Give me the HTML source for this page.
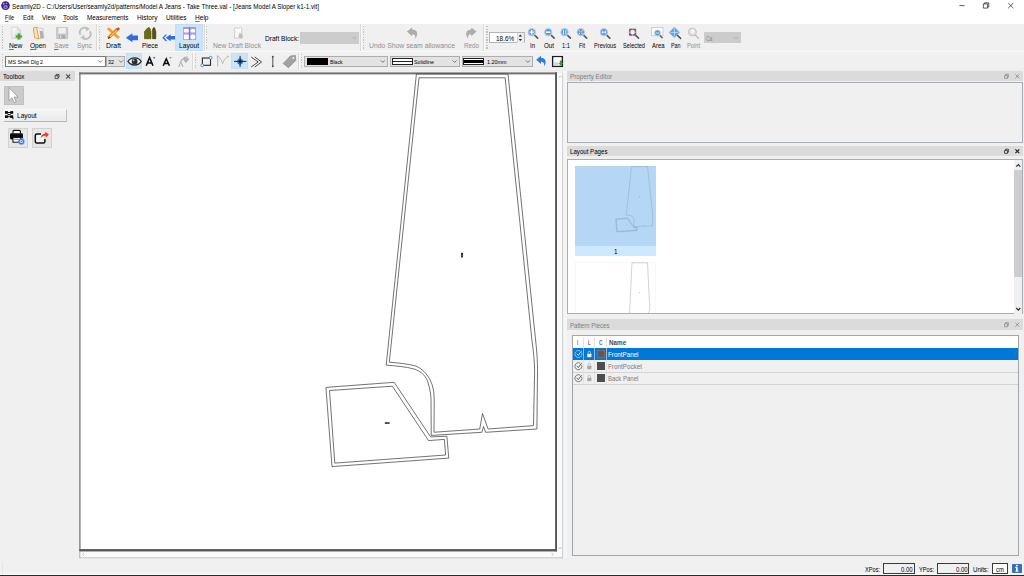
<!DOCTYPE html>
<html lang="en">
<head>
<meta charset="utf-8">
<title>Seamly2D - Layout</title>
<style>
html,body{margin:0;padding:0;}
body{width:1024px;height:576px;overflow:hidden;background:#f0f0f0;font-family:"Liberation Sans",sans-serif;}
#app{position:relative;width:1024px;height:576px;overflow:hidden;background:#f0f0f0;}
#app div{position:absolute;box-sizing:border-box;}
.t{position:absolute;white-space:nowrap;transform-origin:0 50%;display:block;}
.t u{text-decoration:underline;text-decoration-thickness:0.4px;text-underline-offset:0.9px;text-decoration-color:rgba(0,0,0,.5);}
#icons{position:absolute;left:0;top:0;width:1024px;height:576px;}
.white{background:#fff;}
.dtitle{background:#dbdbdb;}
.combo{background:#e3e3e3;border:0.6px solid #adadad;}
.combo.dis{background:#cccccc;border-color:#cccccc;}
.combo.wh{background:#fff;border-color:#7a7a7a;}
.hl{background:#cce4f7;border:0.5px solid #c3def5;}
.sep{background:#dadada;width:0.9px;box-shadow:0.9px 0 0 #fbfbfb;}
.sep2{background:#fff;width:1px;}
.grip{width:1.4px;background-image:repeating-linear-gradient(to bottom,#c2c2c2 0,#c2c2c2 0.8px,transparent 0.8px,transparent 1.6px);}
.tbtn{background:#e6e6e6;border:0.6px solid #d2d2d2;}

</style>
</head>
<body>
<div id="app">
<!-- title + menu -->
<div class="white" style="left:0;top:0;width:1024px;height:23.6px"></div>
<!-- toolbar separators lines -->
<div style="left:0;top:51px;width:1024px;height:1px;background:#fbfbfb"></div>
<div style="left:0;top:69.6px;width:1024px;height:1.2px;background:linear-gradient(#e2e2e2,#f4f4f4)"></div>

<!-- toolbar 1 grips & separators -->
<div class="grip" style="left:1.6px;top:26px;height:24px"></div>
<div class="sep" style="left:96.3px;top:24px;height:27px"></div>
<div class="grip" style="left:99px;top:26px;height:24px"></div>
<div class="sep" style="left:203.8px;top:24px;height:27px"></div>
<div class="grip" style="left:206px;top:26px;height:24px"></div>
<div class="sep" style="left:360.3px;top:24px;height:27px"></div>
<div class="grip" style="left:362.6px;top:26px;height:24px"></div>
<div class="sep" style="left:483.3px;top:24px;height:27px"></div>
<div class="grip" style="left:486.4px;top:26px;height:24px"></div>

<!-- layout button highlight -->
<div class="hl" style="left:175px;top:24px;width:28.4px;height:26.8px"></div>

<!-- draft block combo (disabled) -->
<div class="combo dis" style="left:300px;top:32px;width:59px;height:11.6px"></div>
<!-- zoom spinbox -->
<div class="combo wh" style="left:489px;top:32.2px;width:35.6px;height:11px;border-color:#b5b5b5"></div>
<div style="left:516.6px;top:32.8px;width:7.4px;height:9.8px;background:#ececec;border-left:0.5px solid #d5d5d5"></div>
<!-- point combo (disabled) -->
<div class="combo dis" style="left:704px;top:32.4px;width:37px;height:10.8px"></div>

<!-- toolbar 2 -->
<div class="grip" style="left:1.6px;top:54px;height:14px"></div>
<div class="combo wh" style="left:5.4px;top:56.3px;width:100.4px;height:10.4px"></div>
<div class="combo" style="left:105.8px;top:56.3px;width:19.6px;height:10.4px"></div>
<div class="hl" style="left:126.4px;top:53.2px;width:16px;height:16px"></div>
<div class="sep" style="left:192.3px;top:52.5px;height:17px"></div>
<div class="grip" style="left:195px;top:54px;height:14px"></div>
<div class="hl" style="left:231px;top:53.2px;width:17px;height:16px"></div>
<div class="sep" style="left:297.8px;top:52.5px;height:17px"></div>
<div class="grip" style="left:300.6px;top:54px;height:14px"></div>
<div class="combo" style="left:304px;top:56.3px;width:83.8px;height:10.4px"></div>
<div style="left:306.6px;top:57.8px;width:21.6px;height:7.2px;background:#000"></div>
<div class="combo" style="left:390.3px;top:56.3px;width:69.4px;height:10.4px"></div>
<div style="left:392px;top:57.6px;width:20.8px;height:7.8px;background:#fff;border:0.8px solid #222"></div>
<div style="left:393px;top:61px;width:19px;height:1px;background:#222"></div>
<div class="combo" style="left:462.1px;top:56.3px;width:70.6px;height:10.4px"></div>
<div style="left:463.4px;top:57.6px;width:20.8px;height:7.8px;background:#fff;border:0.8px solid #222"></div>
<div style="left:464.4px;top:60.2px;width:19px;height:2.6px;background:#000"></div>

<!-- Toolbox dock -->
<div class="dtitle" style="left:0;top:70.9px;width:75px;height:10px"></div>
<div style="left:4px;top:85.8px;width:19.6px;height:19px;background:#cbcbcb;border:0.5px solid #c0c0c0"></div>
<div style="left:3px;top:108.8px;width:64.4px;height:12.9px;background:linear-gradient(#f4f4f4,#ebebeb);border:0.6px solid #fafafa;border-right:1px solid #c2c2c2;border-bottom:1.1px solid #b9b9b9"></div>
<div class="tbtn" style="left:8px;top:128.2px;width:19.7px;height:19.6px"></div>
<div class="tbtn" style="left:32px;top:128.2px;width:19.9px;height:19.6px"></div>

<!-- canvas -->
<div style="left:80px;top:73px;width:476px;height:477px;background:#fff"></div>
<!-- scrollbars (thin) -->
<div style="left:557px;top:73px;width:5.4px;height:485px;background:#fafafa"></div>
<div style="left:80px;top:551px;width:482.4px;height:6.6px;background:#fafafa"></div>
<div style="left:563.2px;top:71px;width:4.2px;height:487px;background:#f5f5f5"></div>
<!-- Property editor -->
<div class="dtitle" style="left:567.3px;top:71px;width:455.9px;height:10.3px"></div>
<div style="left:567.4px;top:82.3px;width:455.8px;height:60.5px;background:#f0f0f0;border:0.9px solid #a9adb4"></div>
<!-- Layout pages -->
<div class="dtitle" style="left:567.3px;top:146px;width:455.9px;height:10.3px"></div>
<div style="left:567.4px;top:159px;width:455.8px;height:155.4px;background:#fff;border:0.9px solid #a9adb4"></div>
<div style="left:575px;top:166px;width:81px;height:79.8px;background:#b5d6f4"></div>
<div style="left:575px;top:245.7px;width:81px;height:10.8px;background:#cde8ff"></div>
<div style="left:575.4px;top:262.2px;width:80.6px;height:51.2px;background:#fff;border:0.5px solid #f8f8f8;border-bottom:none"></div>
<!-- scrollbar -->
<div style="left:1014.2px;top:160px;width:8.2px;height:153.6px;background:#f0f0f0"></div>
<div style="left:1014.2px;top:169.8px;width:8.2px;height:106.8px;background:#cdcdcd"></div>
<!-- Pattern pieces -->
<div class="dtitle" style="left:567.3px;top:319.4px;width:455.9px;height:10.3px"></div>
<div style="left:572px;top:335.2px;width:447px;height:220.4px;background:#f0f0f0;border:0.9px solid #a0a6ae"></div>
<div class="white" style="left:572.9px;top:336.1px;width:445.2px;height:11.9px"></div>
<div style="left:583.4px;top:337px;width:0.6px;height:10px;background:#e3e3e3"></div>
<div style="left:594.4px;top:337px;width:0.6px;height:10px;background:#e3e3e3"></div>
<div style="left:606.4px;top:337px;width:0.6px;height:10px;background:#e3e3e3"></div>
<div style="left:572.9px;top:348.2px;width:445.2px;height:11.8px;background:#0078d7"></div>
<div style="left:572.9px;top:372px;width:445.2px;height:0.7px;background:#d4d4d4"></div>
<div style="left:572.9px;top:384px;width:445.2px;height:0.7px;background:#d4d4d4"></div>
<div style="left:583.4px;top:348px;width:0.6px;height:36px;background:#dcdcdc;opacity:.7"></div>
<div style="left:594.4px;top:348px;width:0.6px;height:36px;background:#dcdcdc;opacity:.7"></div>
<div style="left:606.4px;top:348px;width:0.6px;height:36px;background:#dcdcdc;opacity:.7"></div>
<div style="left:597px;top:350px;width:8px;height:8px;background:#5a5a5a;border:0.5px solid #8a6a55"></div>
<div style="left:597px;top:362px;width:8px;height:8px;background:#4d4d4d"></div>
<div style="left:597px;top:374px;width:8px;height:8px;background:#4d4d4d"></div>

<!-- status bar -->
<div style="left:0;top:573.4px;width:1024px;height:1.2px;background:#f7f7f7"></div>
<div style="left:883.2px;top:563.2px;width:32.2px;height:10.4px;background:#f0f0f0;border:0.9px solid #3a3a3a"></div>
<div style="left:937.4px;top:563.2px;width:32px;height:10.4px;background:#f0f0f0;border:0.9px solid #3a3a3a"></div>
<div style="left:991.8px;top:563.2px;width:16.4px;height:10.4px;background:#fff;border:0.9px solid #3a3a3a"></div>
<div style="left:1012px;top:563.6px;width:9.6px;height:9.2px;background:#3b6fb0;border-radius:1px"></div>

<div style="left:1.5px;top:561.6px;width:1px;height:13px;background:#e5e5e5"></div>

<div style="left:0;top:574.6px;width:1024px;height:1.4px;background:#2b2b2b"></div>

<svg id="icons" viewBox="0 0 1024 576" width="1024" height="576">
<defs>
  <radialGradient id="lens" cx="50%" cy="45%" r="60%">
    <stop offset="0" stop-color="#3f8fe6"/><stop offset="0.6" stop-color="#5c9fe3"/><stop offset="1" stop-color="#b9d3ef"/>
  </radialGradient>
  <radialGradient id="lensg" cx="50%" cy="45%" r="60%">
    <stop offset="0" stop-color="#f4f4f4"/><stop offset="0.7" stop-color="#dcdcdc"/><stop offset="1" stop-color="#c2c2c2"/>
  </radialGradient>
  <g id="mag">
    <line x1="3.1" y1="3.1" x2="5.9" y2="5.9" stroke="#5c5c5c" stroke-width="1.7" stroke-linecap="round"/>
    <circle cx="0" cy="0" r="3.75" fill="url(#lens)" stroke="#c9c6bf" stroke-width="0.9"/>
  </g>
  <g id="pieces-outer">
    <path d="M416.4,74 L508,74 L535.6,340 C537,353 537.6,362 537.5,372 L536.9,429 L485.6,432.3 L483.5,426.5 L481.9,432.3 L431.25,435.4 L431,400.3 C431,395 430,389 428,382.7 C426.5,377 422,371.5 414,369 C406,366.6 396,366 386.2,365.1 Z"/>
  </g>
  <g id="pieces-inner">
    <path d="M419,77.8 L505.1,77.8 L531.9,340 C533.5,352 534.7,362 534.6,372 L533.5,425.6 L488.1,429 L482.5,413.5 L479.75,429 L434,432.25 L434.2,400 C434.3,392 433,386 430.6,381 C427.5,374 421.5,368.2 415.7,366 C407,363.6 398,363 389.3,362.2 Z"/>
  </g>
  <g id="pocket">
    <path d="M325.9,387.4 L394.2,382.3 L430.6,436.9 L446.9,436.25 L448.75,458.1 L332,466.6 Z"/>
    <path d="M329.5,390.5 L392.4,386.2 L428.5,440.6 L444.4,439.4 L445.6,455 L334.8,463.1 Z"/>
  </g>
</defs>

<!-- ===== canvas frame (fractional edges) ===== -->
<rect x="562.3" y="72.6" width="0.8" height="485.6" fill="#c2c6cd"/>
<rect x="79.2" y="557.4" width="483.9" height="0.85" fill="#b9bdc5"/>
<rect x="79.2" y="72.4" width="1.4" height="479" fill="#7c8088"/>
<rect x="79.2" y="551.4" width="1.1" height="6.8" fill="#b4b8c0"/>
<rect x="79.2" y="72.4" width="477.8" height="2" fill="#737373"/>
<rect x="555.1" y="72.4" width="1.9" height="479" fill="#555"/>
<rect x="79.4" y="549.1" width="477.6" height="2.3" fill="#555"/>
<rect x="80.6" y="551.4" width="474.5" height="0.6" fill="#a8a8a8" opacity=".6"/>
<!-- ===== canvas pattern pieces ===== -->
<g fill="none" stroke="#3c3c3c" stroke-width="0.72" stroke-linejoin="miter">
  <use href="#pieces-outer"/><use href="#pieces-inner"/><use href="#pocket"/>
</g>
<path d="M460.4,255.1 L462,253.6 L463.6,255.1 L462,256.6 Z" fill="#9a9a9a" opacity=".55"/>
<rect x="461.15" y="252.7" width="1.7" height="2.2" rx="0.5" fill="#111"/><rect x="461.15" y="255.3" width="1.7" height="2.2" rx="0.5" fill="#111"/>
<rect x="461.3" y="254.6" width="1.4" height="1" fill="#444"/>
<path d="M387.2,421.6 L388.7,423.05 L387.2,424.5 L385.7,423.05 Z" fill="#9a9a9a" opacity=".55"/>
<rect x="384.8" y="422.25" width="2.2" height="1.6" rx="0.5" fill="#111"/><rect x="387.4" y="422.25" width="2.2" height="1.6" rx="0.5" fill="#111"/>
<rect x="386.7" y="422.4" width="1" height="1.3" fill="#444"/>

<!-- thumbnails -->
<g transform="translate(558.75,154.27) scale(0.1747,0.1666)" fill="none" stroke="#86a3c6" stroke-width="2.5">
  <use href="#pieces-outer"/><use href="#pocket"/>
</g>
<circle cx="639.5" cy="196.8" r="0.45" fill="#6f8fb3"/>
<circle cx="626.8" cy="224.9" r="0.45" fill="#6f8fb3"/>
<clipPath id="clip2"><rect x="575" y="262" width="82" height="51.8"/></clipPath>
<g clip-path="url(#clip2)">
<path d="M629.5,313.6 L632,262.8 L647.5,262.8 L649.8,310.2 C649.2,311.4 648.2,312.2 647.6,313.6" fill="none" stroke="#c6c6c6" stroke-width="0.8"/>
</g>
<circle cx="639.4" cy="292.3" r="0.45" fill="#9a9a9a"/>

<!-- ===== title bar ===== -->
<circle cx="5.5" cy="5.6" r="4.3" fill="#3d1d8c"/>
<g fill="#a695d8">
  <ellipse cx="3.7" cy="3.9" rx="0.9" ry="1.1"/>
  <ellipse cx="6.5" cy="3.5" rx="0.9" ry="0.8"/>
  <path d="M3.2,7.4 C3.6,5.6 5.6,4.6 7,5.4 C8.2,6.2 8,8 6.8,8.8 C5.6,9.4 3.6,9 3.2,7.4 Z" opacity=".85"/>
</g>
<circle cx="5.5" cy="7.4" r="0.8" fill="#4a2a9a"/>
<g stroke="#1a1a1a" stroke-width="0.7" fill="none">
  <path d="M959.4,5.6 L964.6,5.6"/>
  <path d="M983.4,3.9 L987.6,3.9 L987.6,8.1 L983.4,8.1 Z M984.6,3.9 L984.6,2.8 L988.8,2.8 L988.8,7 L987.6,7" />
  <path d="M1008.2,3 L1013.4,8.2 M1013.4,3 L1008.2,8.2"/>
</g>

<!-- ===== toolbar 1 icons ===== -->
<!-- New -->
<g>
  <linearGradient id="pg" x1="0" y1="0" x2="1" y2="1"><stop offset="0" stop-color="#ffffff"/><stop offset="1" stop-color="#d6d6d6"/></linearGradient>
  <path d="M11.8,27.2 L17.8,27.2 L20.6,30 L20.6,38.4 L11.8,38.4 Z" fill="url(#pg)" stroke="#c4c4c4" stroke-width="0.55"/>
  <path d="M17.8,27.2 L17.8,30 L20.6,30" fill="#ececec" stroke="#bdbdbd" stroke-width="0.5"/>
  <path d="M17.7,33.4 L20.1,33.4 L20.1,35.3 L22,35.3 L22,37.7 L20.1,37.7 L20.1,39.6 L17.7,39.6 L17.7,37.7 L15.8,37.7 L15.8,35.3 L17.7,35.3 Z" fill="#46a838" stroke="#7cc86d" stroke-width="0.4"/>
</g>
<!-- Open -->
<g>
  <path d="M36.4,27.6 L42.8,28.6 L43.8,38 L37.4,38.8 Z" fill="#f3f3f3" stroke="#9c9c9c" stroke-width="0.5"/>
  <path d="M39.6,30.6 L42.6,31.2 L43.4,37.8 L40.4,38.2 Z" fill="#8c8c8c" opacity=".65"/>
  <path d="M33.4,27.8 L36.6,27.2 L38.8,38.8 L34.6,37.8 Z" fill="#fbe3bd" stroke="#e39a3a" stroke-width="0.9"/>
</g>
<!-- Save (disabled) -->
<g>
  <path d="M56.6,27.6 L67.6,27.6 L67.6,38.6 L56.6,38.6 Z" fill="#c9c9c9" stroke="#b4b4b4" stroke-width="0.6"/>
  <rect x="58.4" y="27.9" width="7.4" height="5.6" fill="#f1f1f1"/>
  <rect x="59" y="35" width="6" height="3.3" fill="#a9a9a9"/>
  <rect x="60" y="35.6" width="1.4" height="2.2" fill="#e6e6e6"/>
</g>
<!-- Sync (disabled) -->
<g fill="none" stroke="#bdbdbd" stroke-width="1.8">
  <path d="M80.5,34.8 A4.7,4.7 0 0 1 87.4,28.7"/>
  <path d="M89.7,31.4 A4.7,4.7 0 0 1 82.8,37.7"/>
</g>
<path d="M85.8,26.6 L89.8,29 L86,31.4 Z" fill="#bdbdbd"/>
<path d="M84.4,39.8 L80.4,37.4 L84.2,35 Z" fill="#bdbdbd"/>
<!-- Draft -->
<g>
  <path d="M106.8,29 L108.8,27.2 L119.8,37 L117.8,38.9 Z" fill="#f5a020"/>
  <path d="M106.9,37 L116.6,27.6 L119,29.6 L109.2,38.9 Z" fill="#f5a020"/>
  <path d="M109,36.4 L116.6,29.2 L118,30.6 L110.4,37.8 Z" fill="#f7c36a" stroke="#8a4d14" stroke-width="0.45"/>
  <path d="M116.6,29.2 L118.2,27.4 L119.8,28.8 L118,30.6 Z" fill="#d9433a" stroke="#8a2a20" stroke-width="0.3"/>
  <path d="M109,36.4 L110.4,37.8 L107.6,38.9 Z" fill="#4a2f14"/>
</g>
<!-- blue arrow -->
<path d="M125.8,37.8 L132.4,33.3 L132.4,35.4 L138,35.4 L138,40.2 L132.4,40.2 L132.4,42.3 Z" fill="#2f6fde"/>
<!-- Piece -->
<g stroke-width="0.6">
  <path d="M144.5,38.7 L144.5,31.6 L147.8,27.8 L149.6,27.8 L151,31.4 L151,38.7 Z" fill="#6d6e08" stroke="#4a4b10"/>
  <path d="M152.6,38.7 L152.6,29.6 L153.4,27.8 L154.6,27.8 L155.8,31.8 L155.8,38.7 Z" fill="#55560a" stroke="#26260c"/>
</g>
<!-- double arrow -->
<path d="M166.4,34.6 L163.2,37.8 L166.4,41" fill="none" stroke="#2f6fde" stroke-width="1.3"/>
<path d="M165.8,37.8 L170.6,34.3 L170.6,36 L175,36 L175,39.6 L170.6,39.6 L170.6,41.3 Z" fill="#2f6fde"/>
<!-- Layout icon -->
<g>
  <rect x="183.1" y="27" width="13" height="13" fill="#a79ae9"/>
  <rect x="183.9" y="28.9" width="4.9" height="3.7" rx="1" fill="#fff"/>
  <rect x="190.4" y="28.9" width="4.9" height="3.7" rx="1.6" fill="#fff"/>
  <rect x="183.9" y="34.6" width="4.9" height="4.6" rx="1" fill="#fff"/>
  <rect x="190.4" y="34.6" width="4.9" height="4.6" rx="1.8" fill="#fff"/>
  <rect x="189.3" y="27" width="0.7" height="13" fill="#6f62b8"/>
</g>
<!-- New draft block (disabled) -->
<g>
  <path d="M234,29 L236,27.6 L238.4,28.6 L240.6,27.4 L242.4,29 L241.4,31 L242.6,38 L234.2,38 L235,31.2 Z" fill="#fbfbfb" stroke="#c2c2c2" stroke-width="0.8"/>
  <path d="M239.2,33.2 L241.6,33.2 L241.6,35.6 L243.2,35.6 L240.4,38.8 L237.6,35.6 L239.2,35.6 Z" fill="#bdbdbd"/>
</g>
<!-- Undo (disabled) -->
<path d="M406.8,31.6 L412.2,27.4 L412.2,29.6 C417,29.6 419.2,33.6 415.2,38.9 C415.8,35.6 414.8,34.2 412.2,34.2 L412.2,36.2 Z" fill="#adadad"/>
<!-- Redo (disabled) -->
<path d="M476.6,31.6 L471.2,27.4 L471.2,29.6 C466.4,29.6 464.2,33.6 468.2,38.9 C467.6,35.6 468.6,34.2 471.2,34.2 L471.2,36.2 Z" fill="#adadad"/>

<!-- combo chevrons -->
<g fill="none" stroke="#9a9a9a" stroke-width="0.6">
  <path d="M352.4,36.8 L354.4,38.8 L356.4,36.8"/>
  <path d="M734,37 L736,39 L738,37"/>
</g>
<g fill="none" stroke="#3a3a3a" stroke-width="0.65">
  <path d="M98.2,60.4 L100.2,62.4 L102.2,60.4"/>
  <path d="M119,60.4 L121,62.4 L123,60.4"/>
  <path d="M380.8,60.4 L382.8,62.4 L384.8,60.4"/>
  <path d="M452.6,60.4 L454.6,62.4 L456.6,60.4"/>
  <path d="M525.8,60.4 L527.8,62.4 L529.8,60.4"/>
</g>
<!-- spinbox arrows -->
<path d="M518.6,36.6 L520.3,34.6 L522,36.6 Z M518.6,39 L520.3,41 L522,39 Z" fill="#222"/>

<!-- zoom icons -->
<use href="#mag" x="531.75" y="32.2"/>
<path d="M531.75,30 L531.75,34.4 M529.55,32.2 L533.95,32.2" stroke="#fff" stroke-width="1.3"/>
<use href="#mag" x="548.25" y="32.2"/>
<path d="M546,32.2 L550.5,32.2" stroke="#fff" stroke-width="1.5"/>
<use href="#mag" x="564.5" y="32.2"/>
<path d="M563.5,30.2 L563.5,34.4 M565.8,30.2 L565.8,34.4" stroke="#fff" stroke-width="0.9"/>
<use href="#mag" x="580.75" y="32.2"/>
<path d="M578.6,30 L582.9,34.4 M582.9,30 L578.6,34.4" stroke="#fff" stroke-width="0.8"/>
<circle cx="580.75" cy="32.2" r="1" fill="#6aa6e6"/>
<use href="#mag" x="603.9" y="32.2"/>
<path d="M601.4,32.2 L603.4,30.6 L603.4,33.8 Z M603.8,32.2 L605.8,30.6 L605.8,33.8 Z" fill="#fff"/>
<use href="#mag" x="632.6" y="32.2"/>
<rect x="630.6" y="30.2" width="4" height="4" fill="#eef4fb"/>
<g fill="none" stroke="#d8321f" stroke-width="1.3">
  <path d="M629.8,31.4 L629.8,29.4 L631.8,29.4 M633.4,29.4 L635.4,29.4 L635.4,31.4 M635.4,33 L635.4,35 L633.4,35 M631.8,35 L629.8,35 L629.8,33"/>
</g>
<!-- Area -->
<rect x="651.6" y="27.6" width="11.4" height="8.2" fill="#fbfdff" stroke="#8db9ec" stroke-width="0.55"/>
<g transform="translate(657.5,33) scale(0.8)"><use href="#mag"/></g>
<path d="M655.8,33 L659.2,33" stroke="#d8e8fa" stroke-width="1"/>
<!-- Pan -->
<line x1="677" y1="35" x2="680.6" y2="38.4" stroke="#4a4a4a" stroke-width="1.5" stroke-linecap="round"/>
<path d="M674.4,27 L679.8,32.4 L674.4,37.8 L669,32.4 Z" fill="#5c9fe3" stroke="#a9c7ea" stroke-width="0.5"/>
<path d="M674.4,28.4 L674.4,36.4 M670.4,32.4 L678.4,32.4" stroke="#d6e6f8" stroke-width="0.8"/>
<!-- Point (disabled) -->
<line x1="695.4" y1="35.2" x2="698.4" y2="38.2" stroke="#bdbdbd" stroke-width="1.5" stroke-linecap="round"/>
<circle cx="692.4" cy="32" r="4" fill="url(#lensg)" stroke="#c4c4c4" stroke-width="0.9"/>
<path d="M691.2,30.4 L693.4,30.4 L693.4,32 L692,32.6" fill="none" stroke="#fff" stroke-width="0.9"/>


<!-- ===== toolbar 2 icons ===== -->
<!-- eye -->
<path d="M128,61.4 C131,56.6 138.2,56.6 141.2,61.4 C138.2,66.2 131,66.2 128,61.4 Z" fill="#f4f8fc" stroke="#2c2c2c" stroke-width="1.3"/>
<circle cx="134.6" cy="61.4" r="2.9" fill="#2c2c2c"/>
<circle cx="133.6" cy="60.4" r="0.9" fill="#c8c8c8"/>
<!-- A+ / A- -->
<g fill="none" stroke="#0a0a0a" stroke-width="1.55" stroke-linejoin="miter" stroke-miterlimit="3">
  <path d="M146.2,65.8 L149.6,57.6 L153,65.8 M147.6,63 L151.6,63"/>
  <path d="M163.2,65.8 L166.3,58.8 L169.4,65.8 M164.4,63.4 L168.2,63.4"/>
</g>
<circle cx="154.2" cy="57.8" r="1" fill="#3a7be0"/>
<path d="M169.2,57.2 L171.8,57.2 L170.5,58.8 Z" fill="#3a7be0"/>
<!-- paint (disabled) -->
<g fill="#b2b2b2">
  <path d="M183.2,59.2 L186.6,55.8 L189.2,59.6 L185.8,63.2 Z"/>
  <path d="M186.6,55.8 L187.4,56.6 L186,60.6 Z" fill="#d6d6d6"/>
  <path d="M178.2,67 L180.8,59.8 L183.4,67 L182.2,67 L180.8,63 L179.4,67 Z"/>
  <path d="M180.6,60.2 L184.6,56.6 L185.4,57.6 L181.4,61.2 Z"/>
</g>
<!-- square with nodes -->
<rect x="202.4" y="58" width="8.1" height="7.3" fill="none" stroke="#333" stroke-width="1.15"/>
<circle cx="210.6" cy="57.7" r="1.45" fill="#eaf2fc" stroke="#2f6fcf" stroke-width="0.75"/>
<circle cx="202.3" cy="65.3" r="1.45" fill="#eaf2fc" stroke="#2f6fcf" stroke-width="0.75"/>
<!-- curve (disabled) -->
<path d="M217.7,66.4 L217.7,55.8 M216.6,56.2 L218.8,56.2 M217.9,56.2 C220,57.4 221.6,60.2 222.6,63.6 C223.8,60.2 225.6,57.6 228.2,56.4 M227,56 L229,57" fill="none" stroke="#b4b4b4" stroke-width="0.95"/>
<!-- crosshair -->
<path d="M240.1,55.8 L240.1,67 M234,61.4 L246.4,61.4" stroke="#1c1c1c" stroke-width="0.9"/>
<circle cx="240.1" cy="61.4" r="3" fill="#3b78d8"/>
<circle cx="240.1" cy="61.4" r="1.6" fill="#1b2f55"/>
<path d="M240.1,57.6 L240.1,65.2 M236.4,61.4 L243.8,61.4" stroke="#1c1c1c" stroke-width="0.7"/>
<!-- chevrons >> -->
<g fill="none" stroke="#4c4c4c" stroke-width="1">
  <path d="M251.2,57 L258.2,62 L251.2,67"/>
  <path d="M254.8,57 L261.6,62 L254.8,67"/>
</g>
<!-- vertical dim line -->
<path d="M272.8,57 L272.8,66" stroke="#4a4a4a" stroke-width="0.95"/>
<circle cx="272.8" cy="56.8" r="0.95" fill="#4a4a4a"/><circle cx="272.8" cy="66.2" r="0.95" fill="#4a4a4a"/>
<!-- tag (disabled) -->
<path d="M283.2,63.4 L290.4,56 L295.4,55.4 L295.8,60.4 L288.4,67.7 Z" fill="#a2a2a2" stroke="#808080" stroke-width="0.6" stroke-linejoin="round"/>
<circle cx="293.3" cy="58" r="0.95" fill="#f0f0f0"/>
<!-- blue undo -->
<path d="M536.2,59.8 L541,55.8 L541,57.8 C545.4,57.8 547.2,61.6 544.2,66.6 C544.6,63.2 543.6,61.8 541,61.8 L541,64 Z" fill="#2f7bdc"/>
<!-- save with arrow -->
<g>
  <rect x="552.6" y="56.6" width="9.8" height="9.8" fill="#f6f6f6" stroke="#1c1c1c" stroke-width="1.3"/>
  <rect x="554.2" y="57.4" width="6.6" height="3.4" fill="#fcfcfc"/>
  <rect x="553.6" y="62.4" width="4.6" height="3.6" fill="#cfd6de"/>
  <path d="M559.8,60.4 L562,60.4 L562,63 L563.2,63 L560.9,66 L558.6,63 L559.8,63 Z" fill="#36a035"/>
</g>

<!-- ===== dock title buttons ===== -->
<g id="dockbtn1" fill="none" stroke="#2a2a2a" stroke-width="0.75">
  <path d="M55.2,75.6 L58,75.6 L58,78.6 L55.2,78.6 Z M56.2,75.6 L56.2,74.4 L59,74.4 L59,77.4 L58,77.4"/>
  <path d="M66.2,74.5 L70.2,78.5 M70.2,74.5 L66.2,78.5" stroke-width="1.05"/>
</g>
<g fill="none" stroke="#777" stroke-width="0.6">
  <path d="M1004.6,75.4 L1007.4,75.4 L1007.4,78.4 L1004.6,78.4 Z M1005.6,75.4 L1005.6,74.2 L1008.4,74.2 L1008.4,77.2 L1007.4,77.2"/>
  <path d="M1015.4,74.4 L1019.2,78.2 M1019.2,74.4 L1015.4,78.2" stroke-width="0.7"/>
</g>
<g fill="none" stroke="#222" stroke-width="0.75">
  <path d="M1004.6,150.4 L1007.4,150.4 L1007.4,153.4 L1004.6,153.4 Z M1005.6,150.4 L1005.6,149.2 L1008.4,149.2 L1008.4,152.2 L1007.4,152.2"/>
  <path d="M1015.4,149.3 L1019.3,153.2 M1019.3,149.3 L1015.4,153.2" stroke-width="1.1"/>
</g>
<g fill="none" stroke="#777" stroke-width="0.6">
  <path d="M1004.6,323.8 L1007.4,323.8 L1007.4,326.8 L1004.6,326.8 Z M1005.6,323.8 L1005.6,322.6 L1008.4,322.6 L1008.4,325.6 L1007.4,325.6"/>
  <path d="M1015.4,322.8 L1019.2,326.6 M1019.2,322.8 L1015.4,326.6" stroke-width="0.7"/>
</g>

<!-- ===== toolbox icons ===== -->
<path d="M9,87.6 L9,100.6 L12,97.8 L14.2,102.8 L16.2,101.9 L14,97.2 L18,97 Z" fill="#fff" stroke="#8a8a8a" stroke-width="0.7" stroke-linejoin="round"/>
<!-- layout small icon -->
<g fill="#0c0c0c">
  <rect x="5" y="111.1" width="2.9" height="2.7"/><rect x="10.3" y="111.1" width="2.9" height="2.7"/>
  <rect x="5" y="115.3" width="2.9" height="2.7"/><rect x="10.3" y="115.3" width="2.9" height="2.7"/>
  <rect x="7" y="112" width="4.4" height="1"/><rect x="7" y="116.2" width="4.4" height="1"/>
  <path d="M7.6,113.4 L9.1,114.2 L10.6,113.4 L10.6,115.6 L9.1,114.9 L7.6,115.6 Z"/>
  <path d="M12.2,117.6 L13.4,117.6 L13.4,119.2 L12.6,119.2 Z"/>
</g>
<!-- printer -->
<g>
  <path d="M13,133.6 L13,131.4 Q13,130.4 14,130.4 L19.4,130.4 Q20.4,130.4 20.4,131.4 L20.4,133.6" fill="#fff" stroke="#0c0c0c" stroke-width="1.1"/>
  <rect x="10" y="133.2" width="13" height="6.2" rx="1.4" fill="#0c0c0c"/>
  <rect x="13" y="137.4" width="7.6" height="4.8" fill="#fff" stroke="#0c0c0c" stroke-width="1"/>
  <rect x="14.2" y="138.8" width="4" height="0.8" fill="#555"/>
  <circle cx="21.3" cy="141.5" r="3.3" fill="#3b7fe0"/>
  <circle cx="21.3" cy="141.5" r="3.2" fill="none" stroke="#e6e6e6" stroke-width="0.9" stroke-dasharray="0.9 1.6"/>
  <circle cx="21.3" cy="141.5" r="1.5" fill="#dfeafa"/>
  <circle cx="21.3" cy="141.5" r="0.7" fill="#3b7fe0"/>
</g>
<!-- export -->
<g>
  <path d="M41,133.9 L37,133.9 Q35.3,133.9 35.3,135.6 L35.3,141.4 Q35.3,143.1 37,143.1 L43.2,143.1 Q44.9,143.1 44.9,141.4 L44.9,139" fill="#f4f4f4" stroke="#0c0c0c" stroke-width="1.5"/>
  <path d="M40.6,138 C41.2,135.2 43,133.8 45.4,133.6 L45.2,131.8 L48.9,134.4 L45.8,137.4 L45.6,135.6 C43.6,135.8 42,136.4 40.6,138 Z" fill="#f0341a"/>
</g>

<!-- ===== table icons ===== -->
<g fill="none" stroke-width="0.65">
  <path d="M581.6,352.6 A3.5,3.5 0 1 1 580,350.9" stroke="#d6e8fb"/>
  <path d="M576.8,353.6 L578.3,355.4 L581.6,350.8" stroke="#fff" stroke-width="0.75"/>
  <path d="M581.6,364.8 A3.5,3.5 0 1 1 580,363.1" stroke="#3c3c3c"/>
  <path d="M576.8,365.8 L578.3,367.6 L581.6,363" stroke="#3c3c3c" stroke-width="0.75"/>
  <path d="M581.6,376.8 A3.5,3.5 0 1 1 580,375.1" stroke="#3c3c3c"/>
  <path d="M576.8,377.8 L578.3,379.6 L581.6,375" stroke="#3c3c3c" stroke-width="0.75"/>
</g>
<g>
  <rect x="587.2" y="353.8" width="4.2" height="3.4" rx="0.4" fill="#f6edd9"/>
  <path d="M588.1,353.8 L588.1,352.5 A1.2,1.2 0 0 1 590.5,352.5 L590.5,353.8" fill="none" stroke="#f6edd9" stroke-width="0.65"/>
  <rect x="587.2" y="365.8" width="4.2" height="3.4" rx="0.4" fill="#a9a9a9"/>
  <path d="M588.1,365.8 L588.1,364.5 A1.2,1.2 0 0 1 590.5,364.5 L590.5,365.8" fill="none" stroke="#a9a9a9" stroke-width="0.65"/>
  <rect x="587.2" y="377.8" width="4.2" height="3.4" rx="0.4" fill="#a9a9a9"/>
  <path d="M588.1,377.8 L588.1,376.5 A1.2,1.2 0 0 1 590.5,376.5 L590.5,377.8" fill="none" stroke="#a9a9a9" stroke-width="0.65"/>
</g>

<!-- ===== scrollbar arrows ===== -->
<g fill="none" stroke="#2a2a2a" stroke-width="1.15">
  <path d="M1016.3,166.7 L1018.3,164.6 L1020.3,166.7"/>
  <path d="M1016.3,308 L1018.3,310.1 L1020.3,308"/>
</g>
<g fill="none" stroke="#a5a5a5" stroke-width="0.6">
  <path d="M558.6,77.6 L560.2,75.8 L561.8,77.6"/>
  <path d="M558.6,547 L560.2,548.8 L561.8,547"/>
  <path d="M84,552.8 L82.4,554.4 L84,556"/>
  <path d="M551.6,552.8 L553.2,554.4 L551.6,556"/>
</g>
<!-- info icon glyph -->
<g fill="#fff">
  <rect x="1016" y="567.2" width="1.7" height="4.2"/><circle cx="1016.85" cy="565.6" r="0.95"/>
  <rect x="1015.2" y="567.2" width="1.6" height="0.8"/><rect x="1015.2" y="570.8" width="3.3" height="0.8"/>
</g>

</svg>

<div id="texts">
<span class="t" style="left:12px;top:2.82px;font-size:6.6px;line-height:7.92px;color:#000;transform:scaleX(0.9494);">Seamly2D - C:/Users/User/seamly2d/patterns/Model A Jeans - Take Three.val - [Jeans Model A Sloper k1-1.vit]</span>
<span class="t" style="left:4.5px;top:14.32px;font-size:6.6px;line-height:7.92px;color:#000;transform:scaleX(0.8458);"><u>F</u>ile</span>
<span class="t" style="left:22.5px;top:14.32px;font-size:6.6px;line-height:7.92px;color:#000;transform:scaleX(0.9231);">Edit</span>
<span class="t" style="left:41.5px;top:14.32px;font-size:6.6px;line-height:7.92px;color:#000;transform:scaleX(0.9515);">View</span>
<span class="t" style="left:63px;top:14.32px;font-size:6.6px;line-height:7.92px;color:#000;transform:scaleX(0.9736);"><u>T</u>ools</span>
<span class="t" style="left:86.5px;top:14.32px;font-size:6.6px;line-height:7.92px;color:#000;transform:scaleX(0.9513);">Measurements</span>
<span class="t" style="left:136.5px;top:14.32px;font-size:6.6px;line-height:7.92px;color:#000;transform:scaleX(0.9992);">History</span>
<span class="t" style="left:165.5px;top:14.32px;font-size:6.6px;line-height:7.92px;color:#000;transform:scaleX(0.9647);">Utilities</span>
<span class="t" style="left:194.5px;top:14.32px;font-size:6.6px;line-height:7.92px;color:#000;transform:scaleX(0.9942);"><u>H</u>elp</span>
<span class="t" style="left:9px;top:41.52px;font-size:6.6px;line-height:7.92px;color:#000;transform:scaleX(1.0225);"><u>N</u>ew</span>
<span class="t" style="left:30px;top:41.52px;font-size:6.6px;line-height:7.92px;color:#000;transform:scaleX(0.9903);"><u>O</u>pen</span>
<span class="t" style="left:54px;top:41.52px;font-size:6.6px;line-height:7.92px;color:#8f8f8f;transform:scaleX(0.9969);"><u>S</u>ave</span>
<span class="t" style="left:77px;top:41.52px;font-size:6.6px;line-height:7.92px;color:#8f8f8f;transform:scaleX(1.0224);">Sync</span>
<span class="t" style="left:106px;top:41.52px;font-size:6.6px;line-height:7.92px;color:#000;transform:scaleX(1.0492);">Draft</span>
<span class="t" style="left:142px;top:41.52px;font-size:6.6px;line-height:7.92px;color:#000;transform:scaleX(0.9697);">Piece</span>
<span class="t" style="left:179px;top:41.52px;font-size:6.6px;line-height:7.92px;color:#000;transform:scaleX(1.0095);">Layout</span>
<span class="t" style="left:213px;top:41.52px;font-size:6.6px;line-height:7.92px;color:#8f8f8f;transform:scaleX(1.0152);">New Draft Block</span>
<span class="t" style="left:369px;top:41.52px;font-size:6.6px;line-height:7.92px;color:#8f8f8f;transform:scaleX(1.0336);">Undo Show seam allowance</span>
<span class="t" style="left:464px;top:41.52px;font-size:6.6px;line-height:7.92px;color:#8f8f8f;transform:scaleX(0.9514);">Redo</span>
<span class="t" style="left:530px;top:41.52px;font-size:6.6px;line-height:7.92px;color:#000;transform:scaleX(0.9091);">In</span>
<span class="t" style="left:544px;top:41.52px;font-size:6.6px;line-height:7.92px;color:#000;transform:scaleX(0.9398);">Out</span>
<span class="t" style="left:562px;top:41.52px;font-size:6.6px;line-height:7.92px;color:#000;transform:scaleX(0.8722);">1:1</span>
<span class="t" style="left:579px;top:41.52px;font-size:6.6px;line-height:7.92px;color:#000;transform:scaleX(0.8188);">Fit</span>
<span class="t" style="left:594px;top:41.52px;font-size:6.6px;line-height:7.92px;color:#000;transform:scaleX(0.8575);">Previous</span>
<span class="t" style="left:623px;top:41.52px;font-size:6.6px;line-height:7.92px;color:#000;transform:scaleX(0.8570);">Selected</span>
<span class="t" style="left:651.5px;top:41.52px;font-size:6.6px;line-height:7.92px;color:#000;transform:scaleX(0.8969);">Area</span>
<span class="t" style="left:670.5px;top:41.52px;font-size:6.6px;line-height:7.92px;color:#000;transform:scaleX(0.8096);">Pan</span>
<span class="t" style="left:687px;top:41.52px;font-size:6.6px;line-height:7.92px;color:#8f8f8f;transform:scaleX(0.8649);">Point</span>
<span class="t" style="left:265px;top:34.62px;font-size:6.6px;line-height:7.92px;color:#000;transform:scaleX(0.9977);">Draft Block:</span>
<span class="t" style="left:496.2px;top:34.92px;font-size:6.6px;line-height:7.92px;color:#000;transform:scaleX(0.9731);">18.6%</span>
<span class="t" style="left:706.2px;top:34.62px;font-size:6.6px;line-height:7.92px;color:#858585;transform:scaleX(0.7467);">Ca</span>
<span class="t" style="left:8px;top:58.57px;font-size:6.0px;line-height:7.2px;color:#000;transform:scaleX(0.8819);">MS Shell Dlg 2</span>
<span class="t" style="left:108px;top:58.57px;font-size:6.0px;line-height:7.2px;color:#000;transform:scaleX(0.8972);">32</span>
<span class="t" style="left:329.5px;top:58.57px;font-size:6.0px;line-height:7.2px;color:#000;transform:scaleX(0.8520);">Black</span>
<span class="t" style="left:414px;top:58.57px;font-size:6.0px;line-height:7.2px;color:#000;transform:scaleX(0.8815);">Solidline</span>
<span class="t" style="left:486.5px;top:58.57px;font-size:6.0px;line-height:7.2px;color:#000;transform:scaleX(0.8991);">1.20mm</span>
<span class="t" style="left:3px;top:73.12px;font-size:6.6px;line-height:7.92px;color:#000;transform:scaleX(0.9457);">Toolbox</span>
<span class="t" style="left:570px;top:73.12px;font-size:6.6px;line-height:7.92px;color:#7d7d7d;transform:scaleX(0.9549);">Property Editor</span>
<span class="t" style="left:570px;top:148.12px;font-size:6.6px;line-height:7.92px;color:#000;transform:scaleX(0.9299);">Layout Pages</span>
<span class="t" style="left:570px;top:321.52px;font-size:6.6px;line-height:7.92px;color:#7d7d7d;transform:scaleX(0.9209);">Pattern Pieces</span>
<span class="t" style="left:16.7px;top:111.52px;font-size:6.6px;line-height:7.92px;color:#000;transform:scaleX(0.9943);">Layout</span>
<span class="t" style="left:613.7px;top:247.82px;font-size:6.6px;line-height:7.92px;color:#000;transform:scaleX(0.9532);">1</span>
<span class="t" style="left:577.4px;top:338.92px;font-size:6.6px;line-height:7.92px;color:#6a6a6a;transform:scaleX(0.5966);font-weight:bold;">I</span>
<span class="t" style="left:587.8px;top:338.92px;font-size:6.6px;line-height:7.92px;color:#6a6a6a;transform:scaleX(0.6450);font-weight:bold;">L</span>
<span class="t" style="left:598.8px;top:338.92px;font-size:6.6px;line-height:7.92px;color:#6a6a6a;transform:scaleX(0.7134);font-weight:bold;">C</span>
<span class="t" style="left:608.8px;top:338.92px;font-size:6.6px;line-height:7.92px;color:#4c4c4c;transform:scaleX(0.9572);font-weight:bold;">Name</span>
<span class="t" style="left:608px;top:350.72px;font-size:6.6px;line-height:7.92px;color:#fff;transform:scaleX(0.9453);">FrontPanel</span>
<span class="t" style="left:608px;top:362.92px;font-size:6.6px;line-height:7.92px;color:#7a7a7a;transform:scaleX(0.9561);">FrontPocket</span>
<span class="t" style="left:608px;top:374.92px;font-size:6.6px;line-height:7.92px;color:#7a7a7a;transform:scaleX(0.9083);">Back Panel</span>
<span class="t" style="left:864.8px;top:565.82px;font-size:6.6px;line-height:7.92px;color:#000;transform:scaleX(0.8526);">XPos:</span>
<span class="t" style="left:901.4px;top:565.82px;font-size:6.6px;line-height:7.92px;color:#000;transform:scaleX(0.9032);">0.00</span>
<span class="t" style="left:919.2px;top:565.82px;font-size:6.6px;line-height:7.92px;color:#000;transform:scaleX(0.8526);">YPos:</span>
<span class="t" style="left:955.6px;top:565.82px;font-size:6.6px;line-height:7.92px;color:#000;transform:scaleX(0.9032);">0.00</span>
<span class="t" style="left:973px;top:565.82px;font-size:6.6px;line-height:7.92px;color:#000;transform:scaleX(0.9253);">Units:</span>
<span class="t" style="left:996.2px;top:565.82px;font-size:6.6px;line-height:7.92px;color:#000;transform:scaleX(0.8867);">cm</span>
</div>
</div>
</body>
</html>
